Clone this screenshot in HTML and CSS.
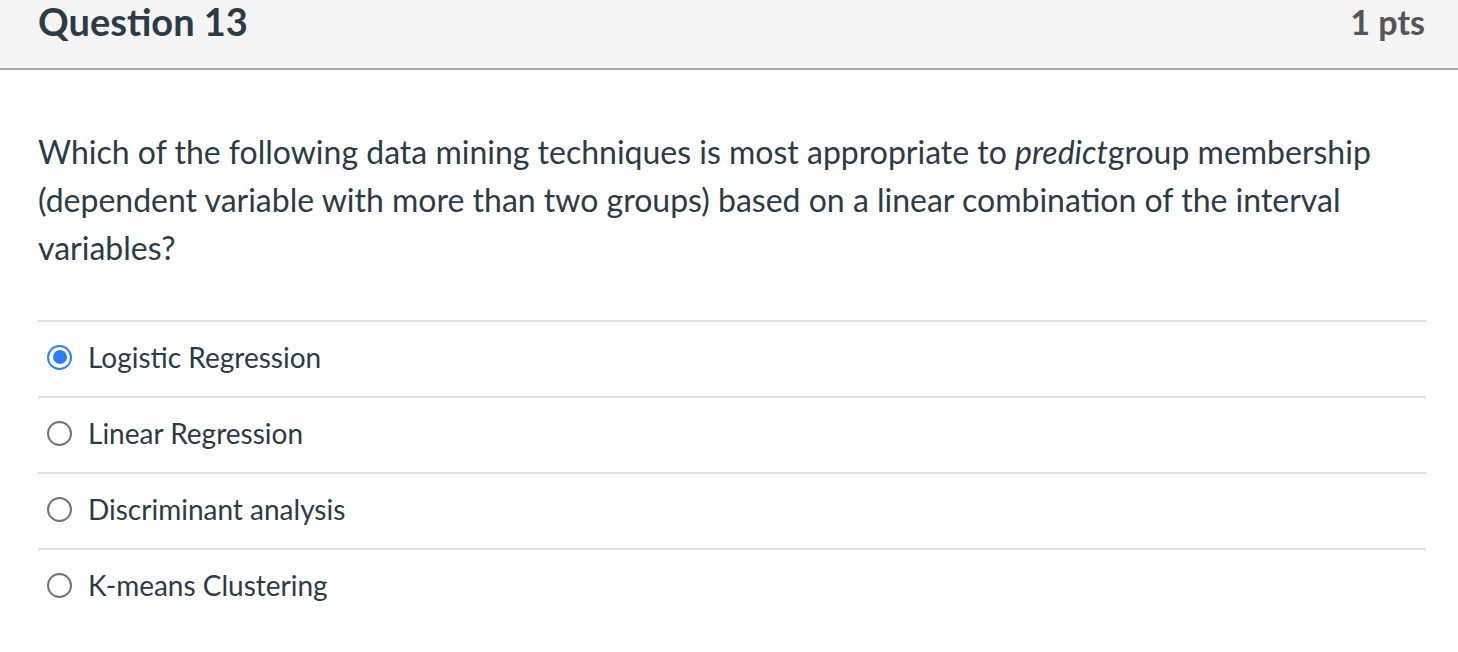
FILE: index.html
```html
<!DOCTYPE html>
<html lang="en">
<head>
<meta charset="utf-8">
<title>Question 13</title>
<link rel="stylesheet" href="styles.css">
</head>
<body>
<div class="question">
  <header class="qheader">
    <h2 class="qtitle">Question 13</h2>
    <span class="qpts">1 pts</span>
  </header>
  <div class="qbody">
    <p class="qtext">Which of the following data mining techniques is most appropriate to <em>predict</em>group membership (dependent variable with more than two groups) based on a linear combination of the interval variables?</p>
    <ul class="answers">
      <li class="answer"><span class="radio checked"></span><span class="label">Logistic Regression</span></li>
      <li class="answer"><span class="radio"></span><span class="label">Linear Regression</span></li>
      <li class="answer"><span class="radio"></span><span class="label">Discriminant analysis</span></li>
      <li class="answer"><span class="radio"></span><span class="label">K-means Clustering</span></li>
    </ul>
  </div>
</div>
</body>
</html>
```
FILE: styles.css
```css
html, body {
  margin: 0;
  padding: 0;
  background: #ffffff;
}
body {
  font-family: Lato, "Noto Sans", sans-serif;
  color: #2d3b45;
}
.question {
  width: 1458px;
}
.qheader {
  display: flex;
  justify-content: space-between;
  align-items: flex-start;
  background: #f5f5f5;
  height: 68px;
  border-bottom: 2px solid #a8a8a8;
  padding: 0 33px 0 38px;
}
.qtitle {
  margin: 0;
  padding-top: 2px;
  font-size: 38px;
  font-weight: 700;
  color: #2d3b45;
  line-height: 38px;
}
.qpts {
  padding-top: 5px;
  font-size: 34px;
  font-weight: 700;
  color: #555555;
  line-height: 34px;
}
.qbody {
  padding: 0 32px 0 38px;
}
.qtext {
  margin: 0;
  padding-top: 58px;
  font-size: 32px;
  line-height: 48px;
}
.qtext em {
  font-style: italic;
}
.answers {
  list-style: none;
  margin: 48px 0 0 0;
  padding: 0;
}
.answer {
  display: flex;
  align-items: center;
  height: 74px;
  border-top: 2px solid #e0e0e0;
  gap: 16px;
  padding-left: 9px;
}
.radio {
  box-sizing: border-box;
  width: 25px;
  height: 25px;
  border: 2px solid #737373;
  border-radius: 50%;
  flex: none;
  display: flex;
  align-items: center;
  justify-content: center;
  position: relative;
  top: -2px;
}
.radio.checked {
  border-color: #2d7ff9;
}
.radio.checked::after {
  content: "";
  width: 14px;
  height: 14px;
  border-radius: 50%;
  background: #2d7ff9;
}
.label {
  font-size: 28px;
  line-height: 34px;
  padding-bottom: 5px;
}
```
